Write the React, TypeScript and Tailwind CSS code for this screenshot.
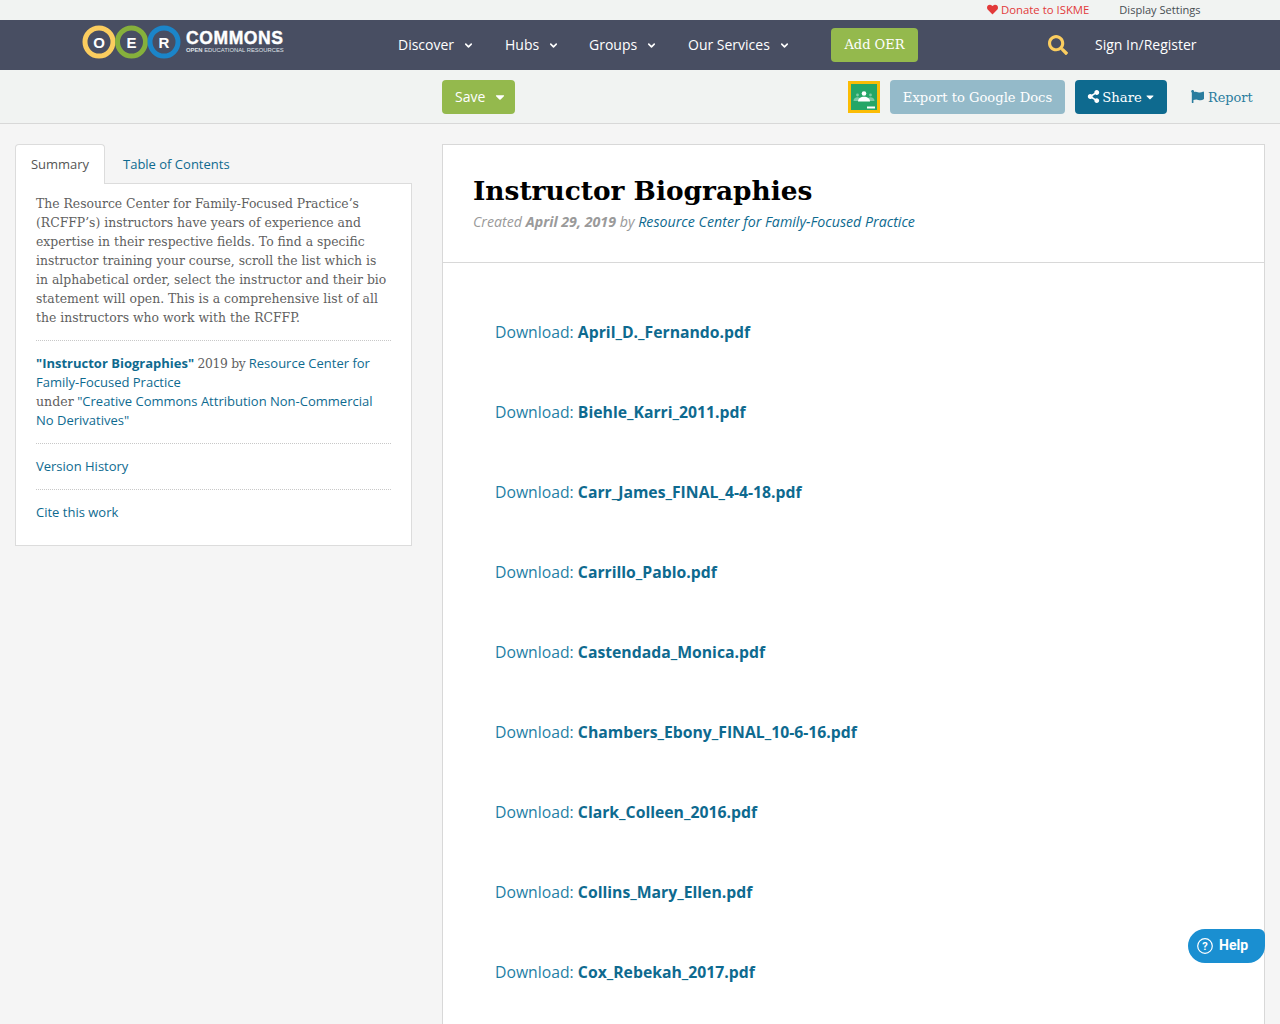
import { ChevronDown } from 'lucide-react';
import { FaHeart, FaFlag, FaShareAlt, FaCaretDown, FaSearch } from 'react-icons/fa';

const SANS = "font-['Open_Sans','Noto_Sans',sans-serif]";

const NAV_ITEMS = [
  { label: 'Discover', cls: 'w-[107px]' },
  { label: 'Hubs', cls: 'w-[84px]' },
  { label: 'Groups', cls: 'w-[99px]' },
  { label: 'Our Services', cls: 'w-[143px]' },
];

const FILES = [
  'April_D._Fernando.pdf',
  'Biehle_Karri_2011.pdf',
  'Carr_James_FINAL_4-4-18.pdf',
  'Carrillo_Pablo.pdf',
  'Castendada_Monica.pdf',
  'Chambers_Ebony_FINAL_10-6-16.pdf',
  'Clark_Colleen_2016.pdf',
  'Collins_Mary_Ellen.pdf',
  'Cox_Rebekah_2017.pdf',
];

function Logo() {
  return (
    <div className="mb-[7px] flex items-center">
      <svg width="102" height="36" viewBox="0 0 102 36" className="shrink-0">
        <circle cx="17" cy="18" r="14" fill="#484e62" stroke="#fbcd5f" strokeWidth="5" />
        <circle cx="49.5" cy="18" r="14" fill="#484e62" stroke="#86b03c" strokeWidth="5" />
        <circle cx="82" cy="18" r="14" fill="#484e62" stroke="#1b85c9" strokeWidth="5" />
        <text x="17" y="23.5" textAnchor="middle" fill="#fff" fontSize="15" fontWeight="700" fontFamily="Liberation Sans">O</text>
        <text x="49.5" y="23.5" textAnchor="middle" fill="#fff" fontSize="15" fontWeight="700" fontFamily="Liberation Sans">E</text>
        <text x="82" y="23.5" textAnchor="middle" fill="#fff" fontSize="15" fontWeight="700" fontFamily="Liberation Sans">R</text>
      </svg>
      <div className="mt-[2px] ml-[2px] flex flex-col font-['Liberation_Sans',sans-serif] text-white">
        <span className="text-[17.5px] leading-[15px] font-bold tracking-[0.6px] [-webkit-text-stroke:0.4px_white]">
          COMMONS
        </span>
        <span className="text-[5.85px] leading-[8px] whitespace-nowrap text-[#dfe1e6]">
          <b>OPEN</b> EDUCATIONAL RESOURCES
        </span>
      </div>
    </div>
  );
}

function ClassroomIcon() {
  return (
    <svg width="32" height="32" viewBox="0 0 32 32" className="shrink-0">
      <rect width="32" height="32" fill="#fbbc05" />
      <rect x="3" y="3" width="26" height="26" fill="#25a667" />
      <circle cx="9.5" cy="14" r="1.4" fill="#7cc9a4" />
      <circle cx="22.5" cy="14" r="1.4" fill="#7cc9a4" />
      <path d="M5.5 20c0-2.6 1.800-3.800 4-3.800s4 1.200 4 3.800zM18.500 20c0-2.600 1.800-3.800 4-3.800s4 1.200 4 3.800z" fill="#7cc9a4" />
      <circle cx="16" cy="12.500" r="2.300" fill="#fff" />
      <path d="M10 20.500c0-3 2.700-4.800 6-4.800s6 1.800 6 4.800z" fill="#fff" />
      <rect x="19" y="25.500" width="8" height="2" fill="#fff" />
    </svg>
  );
}

export default function App() {
  return (
    <div className={`relative h-[1024px] overflow-hidden bg-[#f5f5f5] ${SANS}`}>
      {/* Top strip */}
      <div className="flex h-5 items-center bg-[#f1f3f2]">
        <a className="ml-[987px] flex items-center gap-[3px] text-[11.35px] text-[#e23a3a]">
          <FaHeart className="text-[11px]" />
          Donate to ISKME
        </a>
        <a className="ml-[30px] text-[11.05px] text-[#484e52]">Display Settings</a>
      </div>

      {/* Main nav */}
      <div className="flex h-[50px] items-center bg-[#484e62] text-white">
        <div className="ml-[82px] w-[316px]">
          <Logo />
        </div>
        {NAV_ITEMS.map((item) => (
          <div key={item.label} className={`flex items-center gap-[9px] text-sm ${item.cls}`}>
            {item.label}
            <ChevronDown size={11} strokeWidth={3.5} />
          </div>
        ))}
        <button className="flex h-[34px] w-[87px] items-center justify-center rounded bg-[#94b94d] font-['DejaVu_Serif',serif] text-[13px] text-white">
          Add OER
        </button>
        <FaSearch className="ml-[130px] text-[20px] text-[#fbcd5f]" />
        <a className="ml-[27px] text-sm">Sign In/Register</a>
      </div>

      {/* Toolbar */}
      <div className="flex h-[54px] items-center border-b border-[#d8d8d8] bg-[#f1f3f2] text-sm">
        <button className="ml-[442px] flex h-[34px] w-[73px] items-center gap-[8px] rounded bg-[#94b94d] pl-[13px] text-sm text-white">
          Save
          <FaCaretDown className="text-[14px]" />
        </button>
        <div className="ml-[333px]">
          <ClassroomIcon />
        </div>
        <button className="ml-[10px] flex h-[34px] w-[175px] items-center justify-center rounded bg-[#94bac9] font-['DejaVu_Serif',serif] text-[13.1px] text-white">
          <span className="mt-[3px]">Export to Google Docs</span>
        </button>
        <button className="ml-[10px] flex h-[34px] w-[92px] items-center justify-center gap-[2px] rounded bg-[#0e6a8f] pl-[1px] font-['DejaVu_Serif',serif] text-[13.2px] text-white">
          <FaShareAlt className="text-[13px]" />
          <span className="mt-[3px]">Share</span>
          <FaCaretDown className="text-[12px]" />
        </button>
        <a className="ml-[24px] flex items-center gap-[4px] font-['DejaVu_Serif',serif] text-[12.9px] text-[#2a7c9e]">
          <FaFlag className="text-[13px]" />
          <span className="mt-[3px]">Report</span>
        </a>
      </div>

      {/* Body */}
      <div className="flex items-start px-[15px] pt-5">
        <aside className="w-[397px] shrink-0">
          <div className="flex h-10 text-[13px]">
            <div className="relative z-10 flex h-10 w-[90px] items-center justify-center rounded-t-sm border border-b-0 border-[#dcdcdc] bg-white text-[#555]">
              Summary
            </div>
            <div className="ml-[18px] flex items-center pt-[1px] text-[#0e6a8f]">Table of Contents</div>
          </div>
          <div className="-mt-px border border-[#dcdcdc] bg-white px-5 pt-[10px] pb-[23px] text-[13px] leading-[19px] text-[#5f5f5f]">
            <p className="mr-[2px] font-['DejaVu_Serif',serif] text-[12.4px] leading-[19px]">
              The Resource Center for Family-Focused Practice’s (RCFFP’s) instructors have years of experience and
              expertise in their respective fields. To find a specific instructor training your course, scroll the list
              which is in alphabetical order, select the instructor and their bio statement will open. This is a
              comprehensive list of all the instructors who work with the RCFFP.
            </p>
            <div className="mt-[13px] border-t border-dotted border-[#c8c8c8] pt-[13px]">
              <b className="text-[#0e6a8f]">"Instructor Biographies"</b>{' '}
              <span className="font-['DejaVu_Serif',serif] text-[12.3px] leading-none tracking-[-0.3px]">2019 by</span>{' '}
              <a className="text-[#0e6a8f]">Resource Center for Family-Focused Practice</a>
              <br />
              <span className="font-['DejaVu_Serif',serif] text-[12.6px] leading-none">under</span>{' '}
              <a className="text-[#0e6a8f]">"Creative Commons Attribution Non-Commercial No Derivatives"</a>
            </div>
            <div className="mt-[13px] border-t border-dotted border-[#c8c8c8] pt-[13px] text-[#0e6a8f]">
              Version History
            </div>
            <div className="mt-[13px] border-t border-dotted border-[#c8c8c8] pt-[13px] text-[#0e6a8f]">
              Cite this work
            </div>
          </div>
        </aside>

        <main className="ml-[30px] h-[900px] flex-1 border border-[#d8d8d8] bg-white">
          <div className="h-[118px] border-b border-[#d8d8d8] pt-[28px] pl-[30px]">
            <h1 className="font-['DejaVu_Serif',serif] text-[26.4px] leading-9 font-bold text-black">
              Instructor Biographies
            </h1>
            <p className="mt-[3px] text-[14.22px] leading-5 text-[#9a9a9a] italic">
              Created <b>April 29, 2019</b> by{' '}
              <a className="text-[#0e6a8f]">Resource Center for Family-Focused Practice</a>
            </p>
          </div>
          <ul className="pt-[30px] pl-[52px] text-[15.75px]">
            {FILES.map((file) => (
              <li key={file} className="flex h-20 items-center text-[#1f7fa5]">
                <span className="whitespace-pre">Download: </span>
                <b className="text-[#0e6a8f]">{file}</b>
              </li>
            ))}
          </ul>
        </main>
      </div>

      {/* Help tab */}
      <div className="absolute top-[929px] left-[1188px] flex h-[34px] w-[77px] items-center rounded-l-[17px] rounded-tr-[6px] rounded-br-[17px] bg-[#1a8fd1] pb-[2px] pl-[9px] font-['Roboto',sans-serif] text-sm font-bold text-white">
        <svg width="16" height="16" viewBox="0 0 16 16" fill="none" className="mt-[2px] mr-[6px]">
          <circle cx="8" cy="8" r="7.300" stroke="#fff" strokeWidth="1.200" />
          <text x="8" y="12" textAnchor="middle" fill="#fff" fontSize="11" fontFamily="Roboto">?</text>
        </svg>
        Help
      </div>
    </div>
  );
}
